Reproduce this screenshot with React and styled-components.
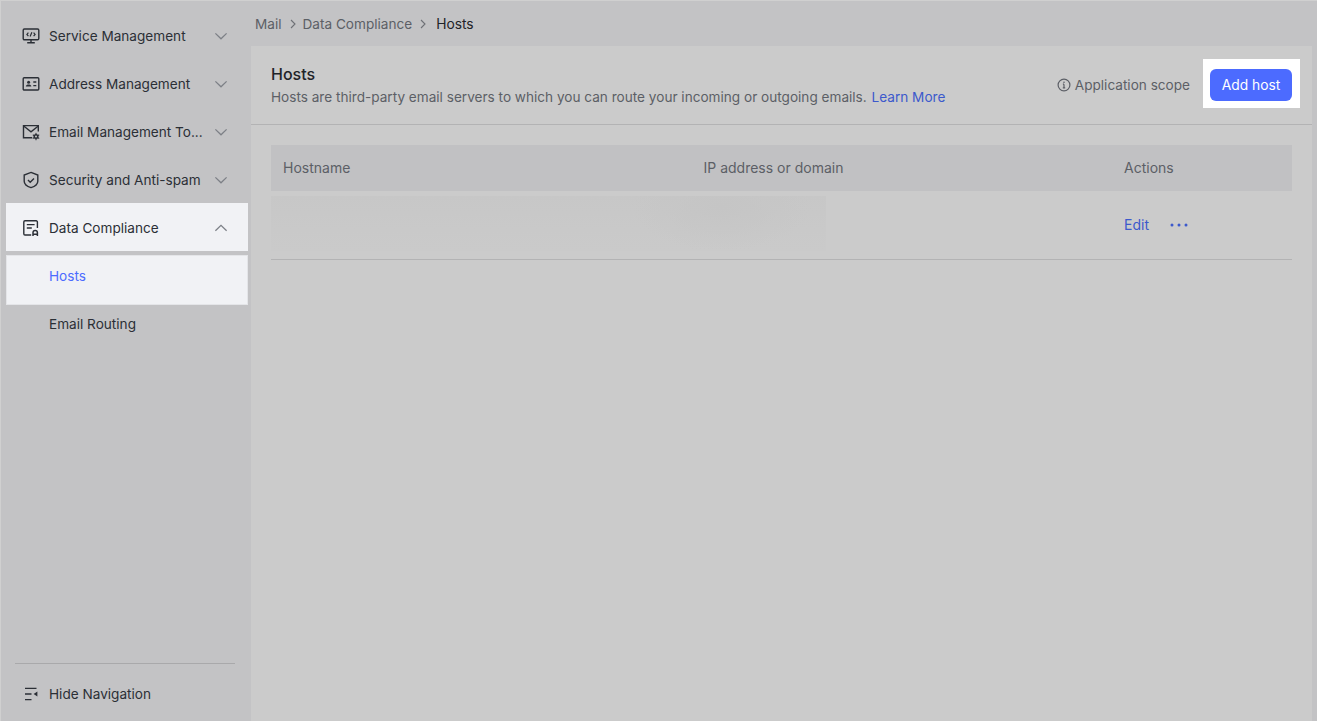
import React from "react";
import styled, { createGlobalStyle } from "styled-components";

const Global = createGlobalStyle`
  html, body { margin: 0; padding: 0; height: 100%; }
  body { background: #d4d4d4; font-family: Inter, "Liberation Sans", sans-serif; overflow: hidden; }
  #root { height: 100%; }
`;

const Page = styled.div`
  width: 1317px; height: 721px; box-sizing: border-box; padding: 1px 0 0 1px;
  display: flex; background: #d0d0d0;
`;
const Sidebar = styled.aside`
  width: 250px; flex: none; background: #c3c3c5; display: flex; flex-direction: column;
  box-sizing: border-box; padding: 10px 0 0 0;
`;
const NavList = styled.nav`
  flex: 1; display: flex; flex-direction: column;
`;
const NavItem = styled.div`
  height: 48px; flex: none; box-sizing: border-box; display: flex; align-items: center;
  padding: 2px 22px 0 21px; font-size: 13.6px; color: ${p => p.$active ? "#4c6bff" : "#2b2f36"};
  ${p => p.$lit && !p.$sub ? "background: #f1f2f5; margin: 0 3px 0 5px; padding: 2px 19px 0 16px;" : ""}
  ${p => p.$lit && p.$sub ? "background: #f1f2f5; border: 1px solid #e4e5e8; height: 50px; margin: 4px 3px -5px 5px; padding: 0 0 8px 42px;" : ""}
  ${p => p.$sub && !p.$lit ? "padding: 0 0 0 48px;" : ""}
`;
const NavIcon = styled.svg`
  width: 18px; height: 18px; flex: none; margin-right: 9px; color: #2b2f36;
  fill: none; stroke: currentColor; stroke-width: 1.4;
`;
const NavLabel = styled.span`
  flex: 1; white-space: nowrap;
`;
const Chevron = styled.svg`
  width: 16px; height: 16px; flex: none; fill: none; stroke: #7d8087; stroke-width: 1.3;
`;
const SideFoot = styled.div`
  margin: 0 16px 0 14px; border-top: 1px solid #a9a9ab; height: 58px; box-sizing: border-box;
  display: flex; align-items: center; padding: 2px 0 0 7px; font-size: 13.6px; color: #2b2f36;
`;
const Main = styled.main`
  flex: 1; display: flex; flex-direction: column; background: #c3c3c5; min-width: 0;
`;
const Crumbs = styled.div`
  height: 45px; box-sizing: border-box; padding: 0 0 0 4px; display: flex; align-items: center;
  font-size: 13.6px; color: #5c5f66;
`;
const CrumbSep = styled.svg`
  width: 10px; height: 10px; margin: 0 5px 0 6px; fill: none; stroke: #6e7076; stroke-width: 1.1;
`;
const CrumbNow = styled.span`
  color: #1f2329; margin-left: 3px; font-size: 13.8px;
`;
const Panel = styled.section`
  flex: 1; margin-right: 5px; background: #cbcbcb; display: flex; flex-direction: column;
`;
const Header = styled.header`
  height: 79px; box-sizing: border-box; border-bottom: 1px solid #b3b3b4;
  display: flex; align-items: center; justify-content: space-between; padding: 0 20px;
`;
const TitleBlock = styled.div`
  display: flex; flex-direction: column; gap: 2px;
`;
const Title = styled.h1`
  margin: 0; font-size: 16px; font-weight: 500; line-height: 22px; color: #1f2329;
`;
const Sub = styled.p`
  margin: 0; font-size: 13.6px; line-height: 20px; color: #5c5f66;
`;
const Link = styled.a`
  color: #3c59cc; margin-left: 1px;
`;
const HeadRight = styled.div`
  display: flex; align-items: center; gap: 20px;
`;
const Scope = styled.div`
  display: flex; align-items: center; gap: 4px; font-size: 13.6px; color: #5c5f66; padding-bottom: 1px;
`;
const ScopeIcon = styled.svg`
  width: 14px; height: 14px; fill: none; stroke: #5c5f66; stroke-width: 1.2;
`;
const Spot = styled.div`
  background: #fff; padding: 10px 8px 7px 7px; margin: -10px -8px -7px -7px;
`;
const Button = styled.button`
  display: block; width: 82px; height: 32px; border: 0; border-radius: 6px; background: #4c6bff;
  color: #fff; font: 400 13.8px Inter, "Liberation Sans", sans-serif;
`;
const TableWrap = styled.div`
  padding: 20px 20px 0;
`;
const Row = styled.div`
  display: grid; grid-template-columns: 420.5px 420.5px 1fr; align-items: center; font-size: 14px;
  ${p => p.$head ? "height: 46px; padding-bottom: 2px; box-sizing: border-box; background: #c1c1c3; color: #5c5f66;" : "height: 69px; box-sizing: border-box; padding-bottom: 1px; border-bottom: 1px solid #b3b3b4;"}
`;
const Cell = styled.div`
  padding-left: 12px;
`;
const Masked = styled.div`
  grid-column: 1 / span 2; width: 555px; height: 55px; margin-top: -3px; justify-self: start;
  background:
    radial-gradient(ellipse 90px 45px at 450px 10px, #c5c5c5, transparent),
    linear-gradient(180deg, #c7c7c7, #c9c9c9 60%, #cacaca);
`;
const Actions = styled.div`
  display: flex; align-items: center; gap: 21px; padding-left: 12px; color: #3c59cc;
`;
const Dots = styled.svg`
  width: 18px; height: 4px; fill: #3c59cc;
`;

const icons = {
  service: <><rect x="1.2" y="2" width="15.6" height="10.8" rx="1.2" /><path d="M9 12.8v3M5.2 15.8h7.6" /><path d="M6.4 5.6 4.9 7.4l1.5 1.8M11.6 5.6l1.5 1.8-1.5 1.8M9.9 5.2 8.1 9.6" strokeWidth="1.2" /></>,
  address: <><rect x="1.2" y="2.8" width="15.6" height="12.2" rx="1" /><circle cx="6.6" cy="7.2" r="1.5" fill="currentColor" stroke="none" /><path d="M3.9 11.6h5.4v-.6c-.6-1-1.6-1.4-2.7-1.4s-2.1.4-2.7 1.4z" fill="currentColor" stroke="none" /><path d="M11.3 7h3M11.3 10.6h3" /></>,
  email: <><path d="M16.3 8.4V2.6H1.5v12.2h8.7" /><path d="m2 3.2 7 5.6 7-5.6" /><circle cx="14" cy="13.6" r="2.5" fill="currentColor" stroke="none" /><path d="M14 10.4v6.4M11.2 12l5.6 3.2M16.8 12l-5.6 3.2" strokeWidth="1.1" strokeLinecap="round" /><circle cx="14" cy="13.6" r="1" fill="#c3c3c5" stroke="none" /></>,
  shield: <><path d="M9 1.4 15.8 4v6.2c0 3.2-3.6 5.4-6.8 6.4-3.2-1-6.8-3.2-6.8-6.4V4z" /><path d="m6 9 2.2 2.2 3.8-3.8" /></>,
  data: <><path d="M9.2 16H3a1.2 1.2 0 0 1-1.2-1.2V3A1.2 1.2 0 0 1 3 1.8h11.2A1.2 1.2 0 0 1 15.4 3v6" /><path d="M4.8 5.6h7.8M4.8 9h5" /><path d="M11 17v-3.4a2.2 2.2 0 0 1 4.4 0V17M11 15.2h4.4" strokeWidth="1.5" /></>,
};
const Icon = ({ name }) => <NavIcon viewBox="0 0 18 18">{icons[name]}</NavIcon>;
const Arrow = ({ up }) => (
  <Chevron viewBox="0 0 16 16"><path d={up ? "m2.4 10.8 5.6-5.4 5.6 5.4" : "m2.4 5.4 5.6 5.4 5.6-5.4"} /></Chevron>
);
const Sep = () => <CrumbSep viewBox="0 0 10 10"><path d="m3 1 4 4-4 4" /></CrumbSep>;

export default function App() {
  return (
    <Page>
      <Global />
      <Sidebar>
        <NavList>
          <NavItem><Icon name="service" /><NavLabel>Service Management</NavLabel><Arrow /></NavItem>
          <NavItem><Icon name="address" /><NavLabel>Address Management</NavLabel><Arrow /></NavItem>
          <NavItem><Icon name="email" /><NavLabel>Email Management To...</NavLabel><Arrow /></NavItem>
          <NavItem><Icon name="shield" /><NavLabel>Security and Anti-spam</NavLabel><Arrow /></NavItem>
          <NavItem $lit><Icon name="data" /><NavLabel>Data Compliance</NavLabel><Arrow up /></NavItem>
          <NavItem $lit $sub $active>Hosts</NavItem>
          <NavItem $sub>Email Routing</NavItem>
        </NavList>
        <SideFoot>
          <NavIcon viewBox="0 0 18 18"><path d="M3 3.4h11.5M3 9h6.5M3 14.6h6.5" /><path d="m15.4 6.4-3.8 2.6 3.8 2.6z" fill="currentColor" stroke="none" /></NavIcon>
          Hide Navigation
        </SideFoot>
      </Sidebar>
      <Main>
        <Crumbs>Mail<Sep />Data Compliance<Sep /><CrumbNow>Hosts</CrumbNow></Crumbs>
        <Panel>
          <Header>
            <TitleBlock>
              <Title>Hosts</Title>
              <Sub>Hosts are third-party email servers to which you can route your incoming or outgoing emails. <Link>Learn More</Link></Sub>
            </TitleBlock>
            <HeadRight>
              <Scope>
                <ScopeIcon viewBox="0 0 14 14"><circle cx="7" cy="7" r="5.9" /><path d="M7 6.2v3.6M5.8 9.8h2.4M5.9 6.2H7" /><circle cx="7" cy="4.2" r=".8" fill="#5c5f66" stroke="none" /></ScopeIcon>
                Application scope
              </Scope>
              <Spot><Button>Add host</Button></Spot>
            </HeadRight>
          </Header>
          <TableWrap>
            <Row $head><Cell>Hostname</Cell><Cell>IP address or domain</Cell><Cell>Actions</Cell></Row>
            <Row>
              <Masked />
              <Actions>
                Edit
                <Dots viewBox="0 0 18 4"><circle cx="2" cy="2" r="1.5" /><circle cx="9" cy="2" r="1.5" /><circle cx="16" cy="2" r="1.5" /></Dots>
              </Actions>
            </Row>
          </TableWrap>
        </Panel>
      </Main>
    </Page>
  );
}
